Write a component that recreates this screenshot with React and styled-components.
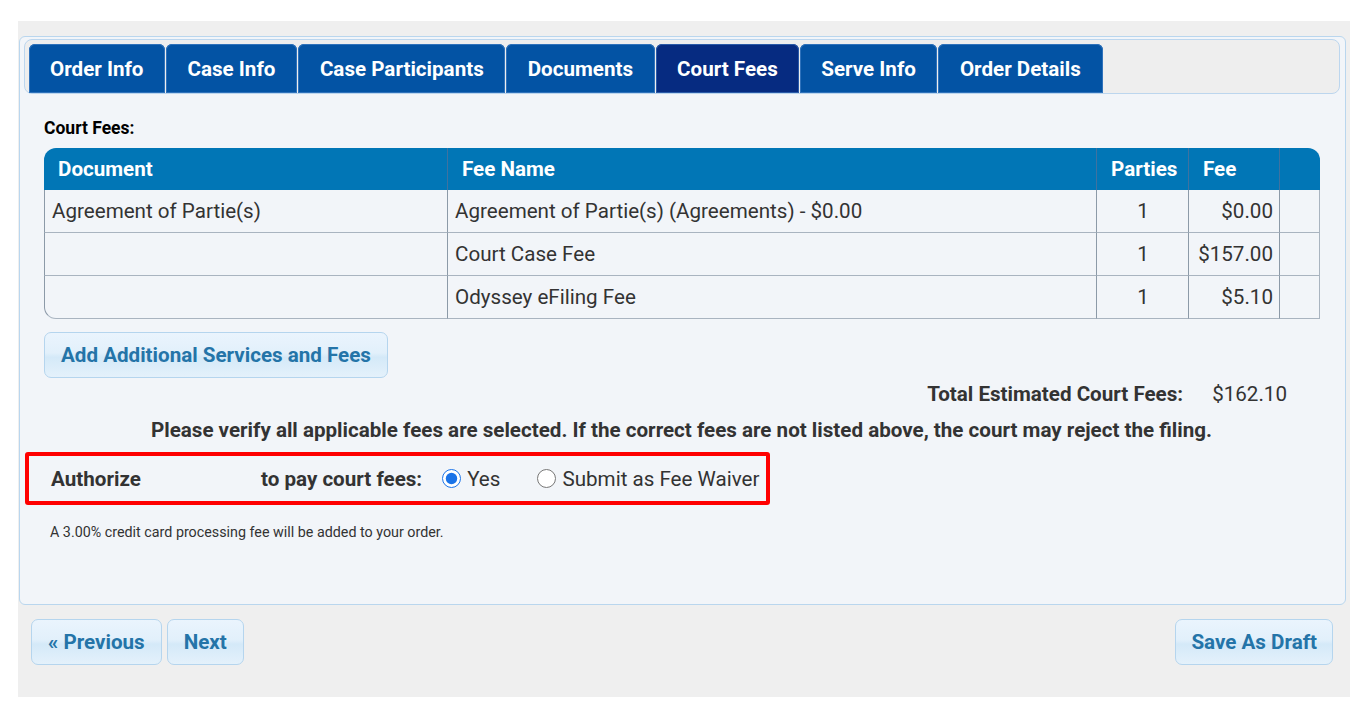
import React, { useState } from "react";
import styled, { createGlobalStyle } from "styled-components";

const GlobalStyle = createGlobalStyle`
  body {
    margin: 0;
    background: #fff;
    font-family: Roboto, "Liberation Sans", Arial, sans-serif;
    color: #333;
  }
`;

const Page = styled.div`
  padding: 21px 0 0 18px;
`;

const Shell = styled.div`
  width: 1332px;
  height: 676px;
  background: #efefef;
  padding-top: 15px;
  box-sizing: border-box;
`;

const Panel = styled.div`
  margin-left: 1px;
  width: 1327px;
  height: 569px;
  box-sizing: border-box;
  background: #f2f5f9;
  border: 1px solid #b9d6ee;
  border-radius: 6px;
  padding: 2px 5px 0 4px;
`;

const TabBar = styled.ul`
  display: flex;
  gap: 1px;
  list-style: none;
  margin: 0;
  height: 55px;
  box-sizing: border-box;
  padding: 5px 4px 0;
  background: #eeeeee;
  border: 1px solid #bcd6ee;
  border-radius: 8px;
  align-items: flex-end;
`;

const Tab = styled.li`
  height: 49px;
  display: flex;
  align-items: center;
  padding: 0 ${(p) => p.$pad}px;
  background: ${(p) => (p.$active ? "#062b81" : "#0353a4")};
  color: #fff;
  font-weight: 700;
  font-size: 20.6px;
  border-radius: 6px 6px 0 0;
  box-shadow: inset 0 0 0 1px ${(p) => (p.$active ? "#2a5aa8" : "#2f72bb")};
  cursor: pointer;
`;

const Body = styled.div`
  padding: 0 21px 0 20px;
`;

const SectionLabel = styled.div`
  margin-top: 24px;
  font-size: 17.5px;
  line-height: 20px;
  font-weight: 700;
  color: #000;
`;

const FeeTable = styled.table`
  margin-top: 10px;
  width: 1276px;
  border-collapse: separate;
  border-spacing: 0;
  font-size: 20.6px;
  color: #333;
  table-layout: fixed;

  th {
    background: #0176b6;
    color: #fff;
    font-weight: 700;
    text-align: left;
    height: 42px;
    padding: 0 12px 0 14px;
    border-left: 1px solid #3f72a0;
    white-space: nowrap;
  }
  th:first-child {
    border-left: none;
    border-top-left-radius: 12px;
  }
  th:last-child {
    border-top-right-radius: 12px;
  }
  td {
    height: 42px;
    padding: 0 6px 0 7px;
    border-left: 1px solid #8c9aa8;
    border-bottom: 1px solid #a9b4c0;
    white-space: nowrap;
  }
  td:last-child {
    border-right: 1px solid #a9b4c0;
  }
  tbody tr:last-child td:first-child {
    border-bottom-left-radius: 12px;
  }
`;

const Cell = styled.td`
  text-align: ${(p) => p.$align || "left"};
`;

const SoftButton = styled.button`
  height: 46px;
  padding: 0 ${(p) => p.$pad || 16}px;
  font-family: Roboto, "Liberation Sans", Arial, sans-serif;
  font-size: 20.6px;
  font-weight: 700;
  color: #2474a8;
  background: linear-gradient(#eaf4fd 0%, #e2f0fb 45%, #d4e9f8 55%, #e4f1fb 100%);
  border: 1px solid #b5d5ee;
  border-radius: 7px;
  cursor: pointer;
  white-space: nowrap;
`;

const AddRow = styled.div`
  margin-top: 13px;
`;

const TotalRow = styled.div`
  display: flex;
  justify-content: flex-end;
  gap: 29px;
  margin-top: 4px;
  padding-right: 32px;
  font-size: 20.6px;
  line-height: 24px;
`;

const TotalLabel = styled.span`
  font-weight: 700;
`;

const Warning = styled.div`
  margin-top: 12px;
  text-align: center;
  font-size: 20.6px;
  font-weight: 700;
  line-height: 24px;
  white-space: nowrap;
`;

const AuthBox = styled.div`
  display: flex;
  align-items: center;
  margin: 10px 0 0 1px;
  width: 745px;
  height: 53px;
  box-sizing: border-box;
  border: 4px solid #ff0000;
  border-radius: 3px;
  padding-left: 22px;
  font-size: 20.6px;
  white-space: nowrap;
`;

const AuthLabel = styled.span`
  font-weight: 700;
  width: ${(p) => p.$w}px;
`;

const RadioLabel = styled.label`
  display: flex;
  align-items: center;
  gap: 6px;
  margin-left: ${(p) => p.$ml}px;
  cursor: pointer;

  input {
    width: 19px;
    height: 19px;
    margin: 0;
    accent-color: #1a73e8;
  }
`;

const Note = styled.div`
  margin: 19px 0 0 26px;
  font-size: 14.3px;
  line-height: 16px;
  color: #333;
`;

const Footer = styled.div`
  display: flex;
  gap: 5px;
  margin: 14px 17px 0 13px;
`;

const Spacer = styled.div`
  flex: 1;
`;

const tabs = [
  ["Order Info", 21],
  ["Case Info", 22],
  ["Case Participants", 21.5],
  ["Documents", 21.5],
  ["Court Fees", 21.5],
  ["Serve Info", 21],
  ["Order Details", 22],
];

const fees = [
  { doc: "Agreement of Partie(s)", name: "Agreement of Partie(s) (Agreements) - $0.00", parties: 1, fee: "$0.00" },
  { doc: "", name: "Court Case Fee", parties: 1, fee: "$157.00" },
  { doc: "", name: "Odyssey eFiling Fee", parties: 1, fee: "$5.10" },
];

export default function App() {
  const [pay, setPay] = useState("yes");

  return (
    <Page>
      <GlobalStyle />
      <Shell>
        <Panel>
          <TabBar>
            {tabs.map(([t, pad]) => (
              <Tab key={t} $pad={pad} $active={t === "Court Fees"}>
                {t}
              </Tab>
            ))}
          </TabBar>
          <Body>
            <SectionLabel>Court Fees:</SectionLabel>
            <FeeTable>
              <colgroup>
                <col style={{ width: 403 }} />
                <col style={{ width: 649 }} />
                <col style={{ width: 92 }} />
                <col style={{ width: 91 }} />
                <col style={{ width: 41 }} />
              </colgroup>
              <thead>
                <tr>
                  <th>Document</th>
                  <th>Fee Name</th>
                  <th>Parties</th>
                  <th>Fee</th>
                  <th></th>
                </tr>
              </thead>
              <tbody>
                {fees.map((f, i) => (
                  <tr key={i}>
                    <Cell>{f.doc}</Cell>
                    <Cell>{f.name}</Cell>
                    <Cell $align="center">{f.parties}</Cell>
                    <Cell $align="right">{f.fee}</Cell>
                    <Cell></Cell>
                  </tr>
                ))}
              </tbody>
            </FeeTable>
            <AddRow>
              <SoftButton>Add Additional Services and Fees</SoftButton>
            </AddRow>
            <TotalRow>
              <TotalLabel>Total Estimated Court Fees:</TotalLabel>
              <span>$162.10</span>
            </TotalRow>
            <Warning>
              Please verify all applicable fees are selected. If the correct fees are not listed above, the court may reject the filing.
            </Warning>
          </Body>
          <AuthBox>
            <AuthLabel $w={210}>Authorize</AuthLabel>
            <AuthLabel>to pay court fees:</AuthLabel>
            <RadioLabel $ml={20}>
              <input type="radio" name="pay" checked={pay === "yes"} onChange={() => setPay("yes")} />
              Yes
            </RadioLabel>
            <RadioLabel $ml={37}>
              <input type="radio" name="pay" checked={pay === "waiver"} onChange={() => setPay("waiver")} />
              Submit as Fee Waiver
            </RadioLabel>
          </AuthBox>
          <Note>A 3.00% credit card processing fee will be added to your order.</Note>
        </Panel>
        <Footer>
          <SoftButton $pad={16}>« Previous</SoftButton>
          <SoftButton $pad={16}>Next</SoftButton>
          <Spacer />
          <SoftButton $pad={15}>Save As Draft</SoftButton>
        </Footer>
      </Shell>
    </Page>
  );
}
